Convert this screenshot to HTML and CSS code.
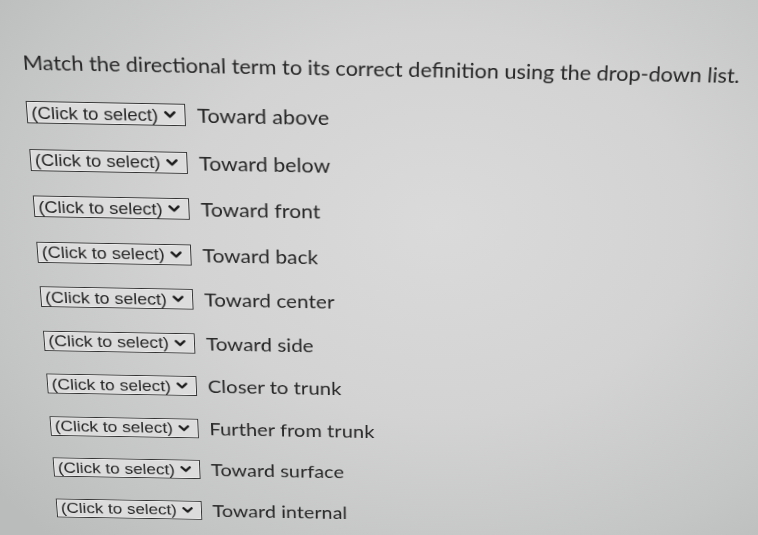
FILE: index.html
```html
<!DOCTYPE html>
<html lang="en">
<head>
  <meta charset="UTF-8">
  <meta name="viewport" content="width=device-width, initial-scale=1.0">
  <title>Directional Terms</title>
  <link rel="stylesheet" href="styles.css">
</head>
<body>
  <div class="sheet">
    <p class="prompt">Match the directional term to its correct definition using the drop-down list.</p>

    <div class="matches">
      <div class="match">
        <div class="picker"><span>(Click to select)</span><svg class="chevron" viewBox="0 0 12 8"><path d="M1.5 1.5 L6 6 L10.5 1.5"/></svg></div>
        <span class="term">Toward above</span>
      </div>
      <div class="match">
        <div class="picker"><span>(Click to select)</span><svg class="chevron" viewBox="0 0 12 8"><path d="M1.5 1.5 L6 6 L10.5 1.5"/></svg></div>
        <span class="term">Toward below</span>
      </div>
      <div class="match">
        <div class="picker"><span>(Click to select)</span><svg class="chevron" viewBox="0 0 12 8"><path d="M1.5 1.5 L6 6 L10.5 1.5"/></svg></div>
        <span class="term">Toward front</span>
      </div>
      <div class="match">
        <div class="picker"><span>(Click to select)</span><svg class="chevron" viewBox="0 0 12 8"><path d="M1.5 1.5 L6 6 L10.5 1.5"/></svg></div>
        <span class="term">Toward back</span>
      </div>
      <div class="match">
        <div class="picker"><span>(Click to select)</span><svg class="chevron" viewBox="0 0 12 8"><path d="M1.5 1.5 L6 6 L10.5 1.5"/></svg></div>
        <span class="term">Toward center</span>
      </div>
      <div class="match">
        <div class="picker"><span>(Click to select)</span><svg class="chevron" viewBox="0 0 12 8"><path d="M1.5 1.5 L6 6 L10.5 1.5"/></svg></div>
        <span class="term">Toward side</span>
      </div>
      <div class="match">
        <div class="picker"><span>(Click to select)</span><svg class="chevron" viewBox="0 0 12 8"><path d="M1.5 1.5 L6 6 L10.5 1.5"/></svg></div>
        <span class="term">Closer to trunk</span>
      </div>
      <div class="match">
        <div class="picker"><span>(Click to select)</span><svg class="chevron" viewBox="0 0 12 8"><path d="M1.5 1.5 L6 6 L10.5 1.5"/></svg></div>
        <span class="term">Further from trunk</span>
      </div>
      <div class="match">
        <div class="picker"><span>(Click to select)</span><svg class="chevron" viewBox="0 0 12 8"><path d="M1.5 1.5 L6 6 L10.5 1.5"/></svg></div>
        <span class="term">Toward surface</span>
      </div>
      <div class="match">
        <div class="picker"><span>(Click to select)</span><svg class="chevron" viewBox="0 0 12 8"><path d="M1.5 1.5 L6 6 L10.5 1.5"/></svg></div>
        <span class="term">Toward internal</span>
      </div>
    </div>
  </div>
</body>
</html>
```

FILE: styles.css
```css
html, body {
  height: 100%;
}

body {
  margin: 0;
  overflow: hidden;
  font-family: Lato, "Open Sans", sans-serif;
  color: #272727;
  background: radial-gradient(ellipse 75% 80% at 58% 42%, #dadada 0%, #d3d3d3 45%, #c4c5c5 80%, #babbbb 100%);
}

.sheet {
  width: 740px;
  padding: 51px 0 0 18px;
  transform-origin: 0 0;
  transform: perspective(1000px) rotateX(-11.9deg) skew(4.45deg, 1.1deg);
}

.prompt {
  margin: 0 0 28px;
  font-size: 22px;
  line-height: 26px;
}

.matches {
  display: flex;
  flex-direction: column;
  gap: 27.5px;
}

.match {
  display: flex;
  align-items: center;
  gap: 12px;
  height: 24px;
}

.picker {
  display: flex;
  align-items: center;
  gap: 6px;
  box-sizing: border-box;
  width: 163px;
  height: 24px;
  padding: 0 5px 0 4px;
  border: 1.5px solid #333;
  box-shadow: inset 0 0 0 1px #eaeaea;
  background: #dcdcdc;
  font-family: "Liberation Sans", Arial, sans-serif;
  font-size: 19px;
  line-height: 1;
  color: #262626;
  white-space: nowrap;
}

.chevron {
  flex: none;
  width: 12px;
  height: 8px;
  fill: none;
  stroke: #1e1e1e;
  stroke-width: 2.6;
  stroke-linecap: round;
  stroke-linejoin: round;
}

.term {
  font-size: 22px;
  line-height: 24px;
  letter-spacing: 0.1px;
}
```
